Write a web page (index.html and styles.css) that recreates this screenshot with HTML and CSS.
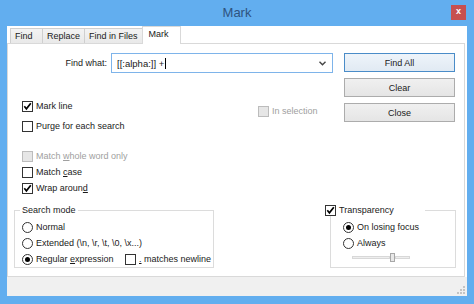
FILE: index.html
```html
<!DOCTYPE html>
<html>
<head>
    <link rel="stylesheet" href="styles.css">
</head>
<body>
    <div class="window">
        <div class="titlebar">
            <div></div>
            <div class="title">Mark</div>
            <div class="close-btn">x</div>
        </div>
        <div class="client">
            <div class="tabs">
                <div class="tab">Find</div>
                <div class="tab">Replace</div>
                <div class="tab">Find in Files</div>
                <div class="tab active">Mark</div>
            </div>
            <div class="panel">
                <div class="top">
                    <div class="left">
                        <div class="find-row">
                            <div class="find-label">Find what:</div>
                            <div class="combo">
                                <span>[[:alpha:]] +</span><span class="caret"></span>
                                <svg class="combo-arrow" width="7" height="5" viewBox="0 0 7 5"><polyline points="0.5,0.8 3.5,3.8 6.5,0.8" fill="none" stroke="#444" stroke-width="1.4"/></svg>
                            </div>
                        </div>
                        <div class="options">
                            <div class="checks">
                                <div class="check-row">
                                    <span class="box"><svg width="9" height="9" viewBox="0 0 9 9"><polyline points="1.3,4.3 3.4,6.8 7.8,1.3" fill="none" stroke="#000" stroke-width="1.7"/></svg></span>
                                    Mark line
                                </div>
                                <div class="check-row spaced">
                                    <span class="box"></span>
                                    Purge for each search
                                </div>
                            </div>
                            <div class="check-row disabled in-selection">
                                <span class="box"></span>
                                In selection
                            </div>
                        </div>
                        <div class="more">
                            <div class="check-row disabled">
                                <span class="box"></span>
                                <span>Match <u>w</u>hole word only</span>
                            </div>
                            <div class="check-row">
                                <span class="box"></span>
                                <span>Match <u>c</u>ase</span>
                            </div>
                            <div class="check-row">
                                <span class="box"><svg width="9" height="9" viewBox="0 0 9 9"><polyline points="1.3,4.3 3.4,6.8 7.8,1.3" fill="none" stroke="#000" stroke-width="1.7"/></svg></span>
                                <span>Wrap aroun<u>d</u></span>
                            </div>
                        </div>
                    </div>
                    <div class="buttons">
                        <div class="btn default">Find All</div>
                        <div class="btn">Clear</div>
                        <div class="btn">Close</div>
                    </div>
                </div>
                <div class="groups">
                    <fieldset class="group search-mode">
                        <legend>Search mode</legend>
                        <div class="check-row first">
                            <span class="radio"></span>
                            Normal
                        </div>
                        <div class="check-row">
                            <span class="radio"></span>
                            Extended (\n, \r, \t, \0, \x...)
                        </div>
                        <div class="check-row">
                            <span class="radio on"></span>
                            <span class="regex-label">Regular <u>e</u>xpression</span>
                            <span class="box"></span>
                            <span><u>.</u> matches newline</span>
                        </div>
                    </fieldset>
                    <fieldset class="group transparency">
                        <legend class="check-row">
                            <span class="box"><svg width="9" height="9" viewBox="0 0 9 9"><polyline points="1.3,4.3 3.4,6.8 7.8,1.3" fill="none" stroke="#000" stroke-width="1.7"/></svg></span>
                            Transparency
                        </legend>
                        <div class="check-row first">
                            <span class="radio on"></span>
                            On losing focus
                        </div>
                        <div class="check-row">
                            <span class="radio"></span>
                            Always
                        </div>
                        <div class="slider">
                            <span class="track left-part"></span>
                            <span class="thumb"></span>
                            <span class="track right-part"></span>
                        </div>
                    </fieldset>
                </div>
            </div>
            <div class="statusbar">
                <svg width="8" height="8" viewBox="0 0 8 8">
                    <rect x="6" y="0" width="2" height="2" fill="#c4c4c4"/>
                    <rect x="3" y="3" width="2" height="2" fill="#c4c4c4"/>
                    <rect x="6" y="3" width="2" height="2" fill="#c4c4c4"/>
                    <rect x="0" y="6" width="2" height="2" fill="#c4c4c4"/>
                    <rect x="3" y="6" width="2" height="2" fill="#c4c4c4"/>
                    <rect x="6" y="6" width="2" height="2" fill="#c4c4c4"/>
                </svg>
            </div>
        </div>
    </div>
</body>
</html>
```

FILE: styles.css
```css
body {
    margin: 0;
    background-color: #62aeef;
    font-family: "Liberation Sans", Arial, sans-serif;
    font-size: 9px;
    color: #1a1a1a;
}

.window {
    display: flex;
    flex-direction: column;
    width: 474px;
    height: 304px;
}

.titlebar {
    display: grid;
    grid-template-columns: 1fr auto 1fr;
    height: 26px;
    flex-shrink: 0;
}

.title {
    font-size: 13px;
    line-height: 26px;
    color: #2e5380;
}

.close-btn {
    justify-self: end;
    width: 15px;
    height: 15px;
    margin-top: 5px;
    margin-right: 8px;
    background-color: #c75050;
    color: white;
    font-size: 9px;
    font-weight: bold;
    line-height: 13px;
    text-align: center;
}

.client {
    flex: 1;
    display: flex;
    flex-direction: column;
    margin: 0 7px 8px 7px;
    background-color: white;
}

.tabs {
    display: flex;
    align-items: flex-end;
    height: 17px;
    padding-left: 3px;
    flex-shrink: 0;
}

.tab {
    display: flex;
    align-items: center;
    box-sizing: border-box;
    height: 15px;
    min-width: 33px;
    padding: 0 4px;
    margin-right: -1px;
    border: 1px solid #cfcfcf;
    border-bottom: none;
    background: linear-gradient(#f3f3f3, #e9e9e9);
}

.tab.active {
    height: 18px;
    min-width: 39px;
    padding: 0 6px 3px 6px;
    margin-bottom: -1px;
    border-color: #d9d9d9;
    background: white;
    position: relative;
    z-index: 1;
}

.panel {
    flex: 1;
    display: flex;
    flex-direction: column;
    margin-right: 2px;
    border: 1px solid #d9d9d9;
}

.top {
    display: flex;
}

.left {
    flex: 1;
}

.find-row {
    display: flex;
    align-items: center;
    margin-top: 9px;
    height: 20px;
}

.find-label {
    width: 99px;
    text-align: right;
    margin-right: 4px;
}

.combo {
    display: flex;
    align-items: center;
    box-sizing: border-box;
    width: 222px;
    height: 20px;
    padding-left: 5px;
    border: 1px solid #7eb4ea;
    font-size: 9.5px;
}

.caret {
    width: 1px;
    height: 11px;
    margin-left: 1px;
    background-color: #000;
}

.combo-arrow {
    margin-left: auto;
    margin-right: 6px;
}

.options {
    display: flex;
    margin-top: 25px;
    padding-left: 14px;
}

.checks {
    width: 236px;
}

.check-row {
    display: flex;
    align-items: center;
    height: 16px;
    gap: 3px;
    white-space: nowrap;
}

.check-row.spaced {
    margin-top: 4px;
}

.in-selection {
    margin-top: 5px;
}

.disabled {
    color: #a0a0a0;
}

.box {
    display: flex;
    align-items: center;
    justify-content: center;
    box-sizing: border-box;
    width: 11px;
    height: 11px;
    border: 1px solid #333;
    background-color: white;
    flex-shrink: 0;
}

.disabled .box {
    border-color: #bcbcbc;
    background-color: #e6e6e6;
}

.radio {
    display: flex;
    align-items: center;
    justify-content: center;
    box-sizing: border-box;
    width: 11px;
    height: 11px;
    border: 1px solid #333;
    border-radius: 50%;
    flex-shrink: 0;
}

.radio.on::after {
    content: '';
    width: 5px;
    height: 5px;
    border-radius: 50%;
    background-color: #000;
}

.more {
    margin-top: 14px;
    padding-left: 14px;
}

.buttons {
    display: flex;
    flex-direction: column;
    gap: 6px;
    width: 111px;
    margin-top: 9px;
    margin-right: 9px;
}

.btn {
    display: flex;
    align-items: center;
    justify-content: center;
    box-sizing: border-box;
    height: 19px;
    border: 1px solid #acacac;
    background: linear-gradient(#f0f0f0, #e5e5e5);
}

.btn.default {
    border-color: #4a8cc8;
    background: linear-gradient(#eef4fa, #e1eaf3);
}

.groups {
    display: flex;
    margin-top: 8px;
}

.group {
    margin: 0;
    box-sizing: border-box;
    border: 1px solid #dcdcdc;
    padding: 0 0 0 7px;
    min-width: 0;
}

.group legend {
    padding: 0 2px;
    margin-left: -2px;
    line-height: 12px;
}

.group .first {
    margin-top: 3px;
}

.search-mode {
    width: 200px;
    margin-left: 6px;
}

.regex-label {
    width: 86px;
}

.transparency {
    width: 126px;
    margin-left: 116px;
    padding-left: 12px;
}

.transparency legend {
    width: 100px;
    margin-left: -18px;
    padding: 0;
    height: 12px;
    background-color: white;
}

.slider {
    display: flex;
    align-items: center;
    height: 12px;
    padding-left: 9px;
}

.track {
    height: 1px;
    border: 1px solid #d8d8d8;
    background-color: #eeeeee;
}

.track.left-part {
    width: 36px;
}

.track.right-part {
    width: 13px;
}

.thumb {
    box-sizing: border-box;
    width: 5px;
    height: 9px;
    border: 1px solid #a8a8a8;
    background-color: #e8e8e8;
}

.statusbar {
    display: flex;
    justify-content: flex-end;
    align-items: flex-end;
    height: 19px;
    padding: 0 2px 2px 0;
    box-sizing: border-box;
    background-color: #f0f0f0;
    flex-shrink: 0;
}
```
